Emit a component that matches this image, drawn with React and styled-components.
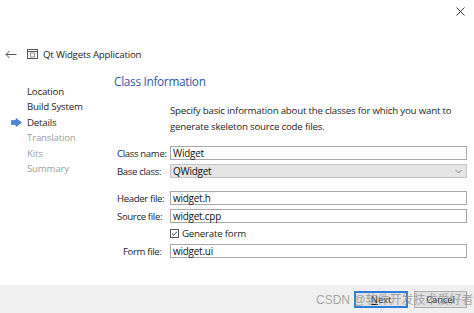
import React from "react";
import styled, { createGlobalStyle } from "styled-components";

const GlobalStyle = createGlobalStyle`
  html, body {
    margin: 0;
    padding: 0;
    background: #ffffff;
  }
  body {
    font-family: "Open Sans", "Noto Sans", sans-serif;
    color: #1e1e1e;
    letter-spacing: -0.2px;
  }
`;

const Window = styled.div`
  position: relative;
  width: 474px;
  height: 313px;
  display: flex;
  flex-direction: column;
  background: #fff;
  overflow: hidden;
`;

const CloseRow = styled.div`
  height: 22px;
  display: flex;
  justify-content: flex-end;
  align-items: center;
  padding-right: 9px;
`;

const TitleRow = styled.div`
  margin-top: 22px;
  height: 20px;
  display: flex;
  align-items: center;
  padding-left: 5px;
  font-size: 9.7px;
  color: #1e1e1e;
`;

const BackButton = styled.span`
  display: flex;
  width: 13px;
  margin-right: 9px;
`;

const AppIcon = styled.span`
  display: flex;
  margin-right: 5px;
`;

const Body = styled.div`
  flex: 1;
  display: grid;
  grid-template-columns: 114px 1fr;
  margin-top: 3px;
`;

const Nav = styled.ul`
  list-style: none;
  margin: 0;
  padding: 17px 0 0 0;
`;

const NavItem = styled.li`
  position: relative;
  height: 15.4px;
  line-height: 15.4px;
  padding-left: 27px;
  font-size: 9.7px;
  color: ${(p) => (p.$muted ? "#a0a0a0" : "#1e1e1e")};
`;

const NavMarker = styled.span`
  position: absolute;
  left: 11px;
  top: 3px;
  display: flex;
`;

const Content = styled.div`
  display: flex;
  flex-direction: column;
  padding-right: 7px;
`;

const Heading = styled.h2`
  margin: 5px 0 0 0;
  height: 18px;
  line-height: 18px;
  font-size: 11.8px;
  letter-spacing: -0.3px;
  font-weight: 400;
  color: #2b5aa8;
`;

const Description = styled.p`
  margin: 13px 0 0 56px;
  font-size: 9.7px;
  line-height: 16px;
`;

const Form = styled.div`
  display: flex;
  flex-direction: column;
  margin-top: 11px;
`;

const Row = styled.div`
  display: grid;
  grid-template-columns: 56px 1fr;
  align-items: center;
  height: ${(p) => p.$h || 14}px;
  margin-top: ${(p) => p.$gap || 0}px;
`;

const Label = styled.span`
  font-size: 9.6px;
  letter-spacing: -0.35px;
  padding-left: ${(p) => p.$indent || 3}px;
  white-space: nowrap;
`;

const Field = styled.div`
  box-sizing: border-box;
  height: 14px;
  border: 1px solid #a9a9a9;
  background: #fff;
  display: flex;
  align-items: center;
  padding-left: 2px;
  font-size: 9.9px;
  color: #111;
`;

const Combo = styled(Field)`
  background: #e5e5e5;
  border-color: #c4c4c4;
  justify-content: space-between;
  padding-right: 4px;
`;

const CheckLine = styled.label`
  grid-column: 2;
  display: flex;
  align-items: center;
  gap: 3px;
  font-size: 9.7px;
`;

const Footer = styled.div`
  height: 28px;
  background: #f0f0f0;
  display: flex;
  justify-content: flex-end;
  align-items: flex-start;
  gap: 6px;
  padding: 6px 7px 0 0;
  box-sizing: border-box;
`;

const Button = styled.button`
  box-sizing: border-box;
  width: ${(p) => p.$w}px;
  height: 17px;
  padding: 0;
  font-family: inherit;
  font-size: 9.6px;
  letter-spacing: -0.2px;
  color: #1e1e1e;
  background: #e1e1e1;
  border: ${(p) => (p.$primary ? "2px solid #2a7fd8" : "1px solid #adadad")};
  u {
    text-decoration: underline;
  }
`;

const Watermark = styled.div`
  position: absolute;
  left: 316px;
  top: 293px;
  font-family: "Liberation Sans", "Noto Sans CJK SC", sans-serif;
  font-size: 12px;
  line-height: 14px;
  letter-spacing: 0;
  color: rgba(140, 140, 140, 0.75);
  pointer-events: none;
  white-space: nowrap;
`;

const CloseIcon = () => (
  <svg width="9" height="9" viewBox="0 0 9 9">
    <path d="M0.5 0.5 L8.5 8.5 M8.5 0.5 L0.5 8.5" stroke="#444" strokeWidth="1" />
  </svg>
);

const BackIcon = () => (
  <svg width="12" height="9" viewBox="0 0 12 9">
    <path d="M11.5 4.5 H1 M4.5 1 L1 4.5 L4.5 8" stroke="#555" strokeWidth="1" fill="none" />
  </svg>
);

const WindowIcon = () => (
  <svg width="11" height="10" viewBox="0 0 11 10">
    <rect x="0.5" y="0.5" width="10" height="9" fill="none" stroke="#555" />
    <path d="M0.5 2.5 H10.5" stroke="#555" />
    <rect x="3.5" y="4" width="4" height="4" fill="none" stroke="#777" strokeWidth="0.8" />
  </svg>
);

const ArrowIcon = () => (
  <svg width="11" height="9" viewBox="0 0 11 9">
    <path d="M0.5 2.5 H5 V0.5 L10.5 4.5 L5 8.5 V6.5 H0.5 Z" fill="#4f86d6" stroke="#3467b4" strokeWidth="0.6" />
  </svg>
);

const Chevron = () => (
  <svg width="7" height="5" viewBox="0 0 7 5">
    <path d="M0.5 1 L3.5 4 L6.5 1" stroke="#777" strokeWidth="0.9" fill="none" />
  </svg>
);

const CheckBox = () => (
  <svg width="9" height="9" viewBox="0 0 9 9">
    <rect x="0.5" y="0.5" width="8" height="8" fill="#fff" stroke="#555" />
    <path d="M2 4.6 L3.8 6.3 L7 2.6" stroke="#333" strokeWidth="0.9" fill="none" />
  </svg>
);

const steps = [
  { name: "Location" },
  { name: "Build System" },
  { name: "Details", current: true },
  { name: "Translation", muted: true },
  { name: "Kits", muted: true },
  { name: "Summary", muted: true }
];

export default function App() {
  return (
    <>
      <GlobalStyle />
      <Window>
        <CloseRow>
          <CloseIcon />
        </CloseRow>
        <TitleRow>
          <BackButton>
            <BackIcon />
          </BackButton>
          <AppIcon>
            <WindowIcon />
          </AppIcon>
          Qt Widgets Application
        </TitleRow>
        <Body>
          <Nav>
            {steps.map((s) => (
              <NavItem key={s.name} $muted={s.muted}>
                {s.current && (
                  <NavMarker>
                    <ArrowIcon />
                  </NavMarker>
                )}
                {s.name}
              </NavItem>
            ))}
          </Nav>
          <Content>
            <Heading>Class Information</Heading>
            <Description>
              Specify basic information about the classes for which you want to
              <br />
              generate skeleton source code files.
            </Description>
            <Form>
              <Row>
                <Label>Class name:</Label>
                <Field>Widget</Field>
              </Row>
              <Row $gap={4}>
                <Label>Base class:</Label>
                <Combo>
                  QWidget
                  <Chevron />
                </Combo>
              </Row>
              <Row $gap={13}>
                <Label>Header file:</Label>
                <Field>widget.h</Field>
              </Row>
              <Row $gap={4}>
                <Label>Source file:</Label>
                <Field>widget.cpp</Field>
              </Row>
              <Row $gap={3} $h={14}>
                <CheckLine>
                  <CheckBox />
                  Generate form
                </CheckLine>
              </Row>
              <Row $gap={4}>
                <Label $indent={9}>Form file:</Label>
                <Field>widget.ui</Field>
              </Row>
            </Form>
          </Content>
        </Body>
        <Footer>
          <Button $primary $w={54}>
            <u>N</u>ext
          </Button>
          <Button $w={53}>Cancel</Button>
        </Footer>
        <Watermark>CSDN @软件开发技术爱好者</Watermark>
      </Window>
    </>
  );
}
